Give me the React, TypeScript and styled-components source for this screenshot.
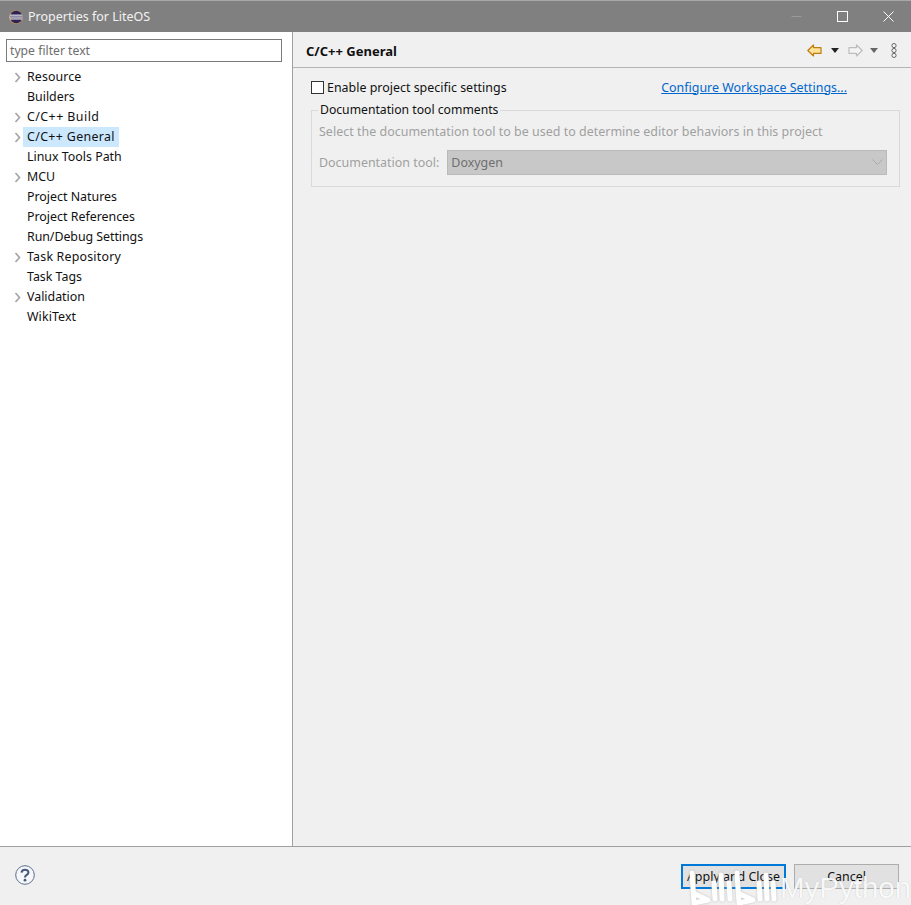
import React from "react";
import styled, { createGlobalStyle } from "styled-components";

const Global = createGlobalStyle`
  html, body { margin: 0; padding: 0; height: 100%; }
  body { font-family: "Noto Sans", "Open Sans", "Liberation Sans", sans-serif; font-size: 12.45px; color: #111; }
  * { box-sizing: border-box; }
`;

const Dialog = styled.div`
  position: relative;
  width: 911px;
  height: 905px;
  display: flex;
  flex-direction: column;
  overflow: hidden;
  background: #f0f0f0;
`;

const TitleBar = styled.div`
  height: 32px;
  flex: none;
  display: flex;
  align-items: center;
  padding-left: 9px;
  background: #808080;
  border-top: 1px solid #a8a8a8;
  color: #f2f2f2;
`;

const TitleText = styled.span`
  margin-left: 5px;
  flex: 1;
  font-size: 12.5px;
  padding-bottom: 1px;
`;

const WinButton = styled.div`
  width: 46px;
  height: 31px;
  display: flex;
  align-items: center;
  justify-content: center;
`;

const Body = styled.div`
  flex: 1;
  display: flex;
  min-height: 0;
`;

const Sidebar = styled.aside`
  width: 293px;
  flex: none;
  background: #fff;
  border-right: 1px solid #a0a0a0;
  padding: 7px 10px 0 6px;
`;

const Filter = styled.div`
  height: 23px;
  border: 1px solid #7a7a7a;
  padding-left: 3px;
  line-height: 22px;
  font-size: 12.2px;
  color: #6d6d6d;
  width: 276px;
`;

const Tree = styled.ul`
  list-style: none;
  margin: 5px 0 0;
  padding: 0;
`;

const TreeRow = styled.li`
  height: 20px;
  display: flex;
  align-items: center;
`;

const Twisty = styled.span`
  width: 17px;
  flex: none;
  display: flex;
  justify-content: flex-end;
  padding-right: 2px;
`;

const TreeLabel = styled.span<{ $selected?: boolean; $track: number }>`
  height: 20px;
  line-height: 20px;
  padding: 0 4px;
  font-size: 12.4px;
  letter-spacing: ${(p) => p.$track}px;
  background: ${(p) => (p.$selected ? "#cce8ff" : "transparent")};
`;

const Main = styled.main`
  flex: 1;
  min-width: 0;
  display: flex;
  flex-direction: column;
`;

const PageHeader = styled.header`
  height: 36px;
  flex: none;
  display: flex;
  align-items: center;
  padding: 0 14px 0 13px;
  border-bottom: 1px solid #b4b4b4;
`;

const PageTitle = styled.h1`
  flex: 1;
  margin: 0;
  padding-top: 2px;
  font-size: 13px;
  font-weight: 700;
  color: #111;
`;

const NavIcons = styled.div`
  display: flex;
  align-items: center;
  padding-top: 2px;
`;

const NavGap = styled.span`
  width: 9px;
`;

const MoreMenu = styled.svg`
  margin-left: 13px;
`;

const Content = styled.div`
  padding: 9px 11px 0 18px;
`;

const TopRow = styled.div`
  display: flex;
  align-items: center;
  height: 20px;
  justify-content: space-between;
  padding-right: 53px;
`;

const CheckLabel = styled.label`
  display: flex;
  align-items: center;
  gap: 3px;
`;

const Box = styled.span`
  width: 13px;
  height: 13px;
  border: 1px solid #333;
  background: #fff;
`;

const WorkspaceLink = styled.a`
  color: #0066cc;
  text-decoration: underline;
`;

const Group = styled.fieldset`
  margin: 4px 0 0;
  padding: 0 12px 0 7px;
  height: 86px;
  border: 1px solid #d9d9d9;
  min-width: 0;
`;

const GroupLegend = styled.legend`
  padding: 0 2px;
  margin-left: -1px;
  font-size: 12.2px;
  line-height: 18px;
`;

const Hint = styled.div`
  color: #a0a0a0;
  line-height: 18px;
  margin-top: 4px;
  letter-spacing: 0.025px;
  white-space: nowrap;
`;

const FieldRow = styled.div`
  margin-top: 9px;
  display: flex;
  align-items: center;
  gap: 8px;
  color: #a0a0a0;
`;

const Select = styled.div`
  flex: 1;
  height: 25px;
  background: #c8c8c8;
  border: 1px solid #bababa;
  color: #6f6f6f;
  display: flex;
  align-items: center;
  justify-content: space-between;
  padding: 0 3px 0 3px;
`;

const Footer = styled.footer`
  height: 59px;
  flex: none;
  border-top: 1px solid #a0a0a0;
  display: flex;
  align-items: center;
  padding: 0 12px 0 15px;
  gap: 8px;
`;

const HelpIcon = styled.svg`
  margin-right: auto;
  margin-bottom: 2px;
`;

const Button = styled.div<{ $primary?: boolean }>`
  height: 25px;
  width: 105px;
  display: flex;
  align-items: center;
  justify-content: center;
  background: #e1e1e1;
  border: ${(p) => (p.$primary ? "2px solid #0078d7" : "1px solid #adadad")};
`;

const Watermark = styled.div`
  position: absolute;
  left: 688px;
  top: 870px;
  display: flex;
  align-items: flex-start;
  gap: 2px;
  pointer-events: none;
`;

const LogoMark = styled.svg`
  filter: drop-shadow(0 0 1px rgba(170, 170, 170, 0.7));
`;

const MarkText = styled.span`
  font-family: "Liberation Sans", sans-serif;
  font-size: 29.5px;
  line-height: 30px;
  margin-top: 3px;
  color: rgba(255, 255, 255, 0.92);
  text-shadow: 0 0 1px rgba(120, 120, 120, 0.4);
  white-space: nowrap;
`;

const items: { label: string; expandable?: boolean; selected?: boolean; track?: number }[] = [
  { label: "Resource", expandable: true, track: 0.1 },
  { label: "Builders" },
  { label: "C/C++ Build", expandable: true, track: 0.45 },
  { label: "C/C++ General", expandable: true, selected: true, track: 0.35 },
  { label: "Linux Tools Path" },
  { label: "MCU", expandable: true },
  { label: "Project Natures" },
  { label: "Project References" },
  { label: "Run/Debug Settings", track: -0.05 },
  { label: "Task Repository", expandable: true, track: 0.2 },
  { label: "Task Tags" },
  { label: "Validation", expandable: true },
  { label: "WikiText", track: 0.1 },
];

const Chevron = () => (
  <svg width="7" height="11" viewBox="0 0 7 11">
    <path d="M1.5 1 L5.5 5.5 L1.5 10" fill="none" stroke="#a6a6a6" strokeWidth="1.7" />
  </svg>
);

const EclipseLogo = () => (
  <svg width="14" height="14" viewBox="0 0 14 14">
    <circle cx="7" cy="7" r="6.6" fill="#e89a3c" />
    <circle cx="7.2" cy="7" r="6.2" fill="#2c2255" />
    <rect x="0.8" y="4.6" width="12.6" height="1.1" fill="#f4f4f4" />
    <rect x="0.5" y="6.5" width="13" height="1.1" fill="#f4f4f4" />
    <rect x="0.8" y="8.4" width="12.6" height="1.1" fill="#f4f4f4" />
  </svg>
);

const Arrow = ({ active }: { active?: boolean }) => (
  <svg width="15" height="13" viewBox="0 0 15 13" style={active ? undefined : { transform: "scaleX(-1)" }}>
    <path
      d="M0.8 6.5 L6.5 1 V3.6 H14 V9.4 H6.5 V12 Z"
      fill={active ? "#ffe29a" : "#f4f4f4"}
      stroke={active ? "#c07d10" : "#bdbdbd"}
      strokeWidth="1.2"
      strokeLinejoin="round"
    />
  </svg>
);

const Caret = styled.svg<{ $gap: number }>`
  margin-left: ${(p) => p.$gap}px;
`;

export default function App() {
  return (
    <Dialog>
      <Global />
      <TitleBar>
        <EclipseLogo />
        <TitleText>Properties for LiteOS</TitleText>
        <WinButton>
          <svg width="11" height="11" viewBox="0 0 11 11">
            <path d="M0.5 5.5 H10.5" stroke="#9a9a9a" strokeWidth="1" />
          </svg>
        </WinButton>
        <WinButton>
          <svg width="11" height="11" viewBox="0 0 11 11">
            <rect x="0.5" y="0.5" width="10" height="10" fill="none" stroke="#fff" strokeWidth="1" />
          </svg>
        </WinButton>
        <WinButton>
          <svg width="11" height="11" viewBox="0 0 11 11">
            <path d="M0.5 0.5 L10.5 10.5 M10.5 0.5 L0.5 10.5" stroke="#fff" strokeWidth="1" />
          </svg>
        </WinButton>
      </TitleBar>
      <Body>
        <Sidebar>
          <Filter>type filter text</Filter>
          <Tree>
            {items.map(({ label, expandable, selected, track }) => (
              <TreeRow key={label}>
                <Twisty>{expandable && <Chevron />}</Twisty>
                <TreeLabel $selected={selected} $track={track ?? 0}>
                  {label}
                </TreeLabel>
              </TreeRow>
            ))}
          </Tree>
        </Sidebar>
        <Main>
          <PageHeader>
            <PageTitle>C/C++ General</PageTitle>
            <NavIcons>
              <Arrow active />
              <Caret $gap={9} width="8" height="5" viewBox="0 0 8 5">
                <path d="M0 0 H8 L4 5 Z" fill="#222" />
              </Caret>
              <NavGap />
              <Arrow />
              <Caret $gap={7} width="8" height="5" viewBox="0 0 8 5">
                <path d="M0 0 H8 L4 5 Z" fill="#666" />
              </Caret>
              <MoreMenu width="6" height="15" viewBox="0 0 6 15">
                <circle cx="3" cy="2.6" r="2.1" fill="#f4f4f4" stroke="#666" />
                <circle cx="3" cy="7.5" r="2.1" fill="#f4f4f4" stroke="#666" />
                <circle cx="3" cy="12.4" r="2.1" fill="#f4f4f4" stroke="#666" />
              </MoreMenu>
            </NavIcons>
          </PageHeader>
          <Content>
            <TopRow>
              <CheckLabel>
                <Box />
                Enable project specific settings
              </CheckLabel>
              <WorkspaceLink>Configure Workspace Settings...</WorkspaceLink>
            </TopRow>
            <Group>
              <GroupLegend>Documentation tool comments</GroupLegend>
              <Hint>Select the documentation tool to be used to determine editor behaviors in this project</Hint>
              <FieldRow>
                Documentation tool:
                <Select>
                  Doxygen
                  <svg width="11" height="7" viewBox="0 0 11 7">
                    <path d="M0.5 0.5 L5.5 5.5 L10.5 0.5" fill="none" stroke="#a8a8a8" strokeWidth="1" />
                  </svg>
                </Select>
              </FieldRow>
            </Group>
          </Content>
        </Main>
      </Body>
      <Footer>
        <HelpIcon width="20" height="20" viewBox="0 0 20 20">
          <circle cx="10" cy="10" r="9.3" fill="#f6f7fa" stroke="#5d6f8f" strokeWidth="1" />
          <path d="M6.6 7.6 C6.8 3.8 13.4 3.8 13.4 7.4 C13.4 10 10 9.6 10 12.4" fill="none" stroke="#46597d" strokeWidth="2.1" />
          <circle cx="10" cy="15.2" r="1.4" fill="#46597d" />
        </HelpIcon>
        <Button $primary>Apply and Close</Button>
        <Button>Cancel</Button>
      </Footer>
      <Watermark>
        <LogoMark width="90" height="35" viewBox="0 0 90 35" fill="none" stroke="#fff" strokeWidth="5" strokeLinecap="round" strokeLinejoin="round">
          <path d="M4 3 L6 33 L20 30 L7 24" />
          <path d="M26 13 L27 29 M33 5 L34 29 M41 13 L42 29" />
          <path d="M49 3 L51 33 L65 30 L52 24" />
          <path d="M71 13 L72 29 M78 5 L79 29 M85 13 L86 29" />
        </LogoMark>
        <MarkText>MyPython</MarkText>
      </Watermark>
    </Dialog>
  );
}
